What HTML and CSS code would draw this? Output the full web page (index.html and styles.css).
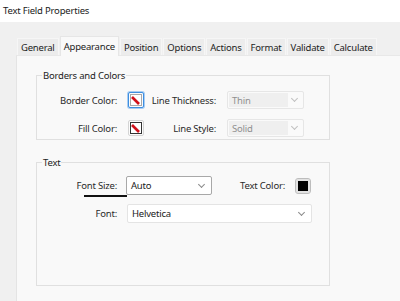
FILE: index.html
```html
<!DOCTYPE html>
<html lang="en">
<head>
    <meta charset="UTF-8">
    <title>Text Field Properties</title>
    <link rel="stylesheet" href="styles.css">
</head>
<body>
    <div class="titleBar">Text Field Properties</div>

    <div class="dialogBody">
        <div class="tabStrip">
            <div class="tab">General</div>
            <div class="tab selected">Appearance</div>
            <div class="tab">Position</div>
            <div class="tab">Options</div>
            <div class="tab">Actions</div>
            <div class="tab">Format</div>
            <div class="tab">Validate</div>
            <div class="tab">Calculate</div>
        </div>

        <div class="tabPanel">
            <fieldset class="groupBox bordersGroup">
                <legend>Borders and Colors</legend>
                <div class="propGrid">
                    <label class="propLabel">Border Color:</label>
                    <div class="colorButton focused">
                        <svg width="14" height="14" viewBox="0 0 14 14">
                            <rect x="1.5" y="1.5" width="11" height="11" fill="#fff" stroke="#555" stroke-width="1" stroke-dasharray="1 1"/>
                            <path d="M3 4 L10 11" stroke="#d0101a" stroke-width="2.6"/>
                        </svg>
                    </div>
                    <label class="propLabel">Line Thickness:</label>
                    <div class="comboBox disabled"><span class="comboValue">Thin</span><span class="comboArrow"></span></div>

                    <label class="propLabel">Fill Color:</label>
                    <div class="colorButton">
                        <svg width="14" height="14" viewBox="0 0 14 14">
                            <rect x="1.5" y="1.5" width="11" height="11" fill="#fff" stroke="#333" stroke-width="1"/>
                            <path d="M3 4 L10 11" stroke="#d0101a" stroke-width="2.6"/>
                        </svg>
                    </div>
                    <label class="propLabel">Line Style:</label>
                    <div class="comboBox disabled"><span class="comboValue">Solid</span><span class="comboArrow"></span></div>
                </div>
            </fieldset>

            <fieldset class="groupBox textGroup">
                <legend>Text</legend>
                <div class="textGrid">
                    <label class="propLabel marked">Font Size:</label>
                    <div class="comboBox sizeCombo"><span class="comboValue">Auto</span><span class="comboArrow"></span></div>
                    <label class="propLabel">Text Color:</label>
                    <div class="swatch"></div>

                    <label class="propLabel">Font:</label>
                    <div class="comboBox fontCombo"><span class="comboValue">Helvetica</span><span class="comboArrow"></span></div>
                </div>
            </fieldset>
        </div>
    </div>
</body>
</html>
```

FILE: styles.css
```css
html, body {
    overflow: hidden;
}

body {
    margin: 0;
    background-color: #f0f0f0;
    color: #1f1f1f;
    font-family: 'Noto Sans', 'Open Sans', sans-serif;
    font-size: 9.5px;
    letter-spacing: -0.2px;
    height: 301px;
}

.titleBar {
    height: 22px;
    line-height: 22px;
    background-color: #fff;
    padding-left: 3px;
    color: #1a1a1a;
}

.dialogBody {
    padding: 14px 0 0 16px;
}

.tabStrip {
    display: flex;
    align-items: flex-end;
    height: 19px;
    padding-left: 1px;
}

.tab {
    height: 17px;
    line-height: 17px;
    padding: 0 3px;
    margin-right: 1px;
    background-color: #ececec;
    border: 1px solid #f6f6f6;
    border-bottom: none;
    box-sizing: border-box;
    color: #222;
}

.tab.selected {
    height: 20px;
    line-height: 19px;
    margin-bottom: -1px;
    padding: 0 3px;
    background-color: #f9f9f9;
    border-color: #e6e6e6;
    position: relative;
}

.tabPanel {
    background-color: #f9f9f9;
    border-left: 1px solid #e4e4e4;
    border-top: 1px solid #e8e8e8;
    height: 244px;
    padding: 13px 0 0 19px;
}

.groupBox {
    width: 294px;
    box-sizing: border-box;
    margin: 0;
    padding: 0;
    border: 1px solid #e0e0e0;
    min-width: 0;
}

.groupBox legend {
    padding: 0 1px;
    margin-left: 5px;
    color: #222;
}

.propGrid {
    display: grid;
    grid-template-columns: 91px 16px 83px 77px;
    grid-auto-rows: 18px;
    row-gap: 10px;
    align-items: center;
    padding: 9px 0 2px 0;
}

.propLabel {
    text-align: right;
    padding-right: 11px;
    color: #2a2a2a;
    white-space: nowrap;
}

.colorButton {
    width: 16px;
    height: 16px;
    box-sizing: border-box;
    border: 1px solid #d4d4d4;
    border-radius: 2px;
    background-color: #fbfbfb;
    display: flex;
    align-items: center;
    justify-content: center;
}

.colorButton.focused {
    border-color: #3d8ee0;
    box-shadow: 0 0 0 1px #a9cdf2;
}

.comboBox {
    height: 18px;
    box-sizing: border-box;
    border: 1px solid #d9d9d9;
    border-radius: 2px;
    background-color: #fff;
    display: flex;
    align-items: center;
    color: #1a1a1a;
}

.comboValue {
    flex: 1;
    padding-left: 4px;
}

.comboArrow {
    width: 14px;
    height: 14px;
    position: relative;
}

.comboArrow::before {
    content: '';
    position: absolute;
    left: 2px;
    top: 3px;
    width: 4px;
    height: 4px;
    border-right: 1px solid #8a8a8a;
    border-bottom: 1px solid #8a8a8a;
    transform: rotate(45deg);
}

.comboBox.disabled {
    background-color: #fafafa;
    border-color: #e6e6e6;
    color: #8f8f8f;
}

.comboBox.disabled .comboValue {
    background-color: #efefef;
    align-self: stretch;
    display: flex;
    align-items: center;
    margin: 1px 0 1px 1px;
    padding-left: 3px;
}

.comboBox.disabled .comboArrow {
    width: 15px;
}

.comboBox.disabled .comboArrow::before {
    border-color: #c0c0c0;
    left: 4px;
}

.textGroup {
    margin-top: 16px;
    height: 130px;
}

.textGrid {
    display: grid;
    grid-template-columns: 89px 86px 84px 14px;
    grid-auto-rows: 19px;
    row-gap: 9px;
    align-items: center;
    padding-top: 7px;
}

.textGrid .propLabel {
    padding-right: 9px;
}

.textGrid .propLabel:nth-child(3) {
    padding-right: 11px;
}

.propLabel.marked {
    position: relative;
}

.propLabel.marked::after {
    content: '';
    position: absolute;
    left: 47px;
    width: 43px;
    top: 16px;
    height: 2px;
    background-color: #111;
}

.sizeCombo {
    height: 19px;
    border-color: #a8a8a8;
}

.swatch {
    width: 14px;
    height: 14px;
    box-sizing: border-box;
    border: 2px solid #e2e2e2;
    outline: 1px solid #bdbdbd;
    background-color: #000;
    border-radius: 2px;
}

.fontCombo {
    grid-column: 2 / 5;
    height: 19px;
    margin-left: 1px;
    margin-right: -2px;
    border-color: #e4e4e4;
}
```
